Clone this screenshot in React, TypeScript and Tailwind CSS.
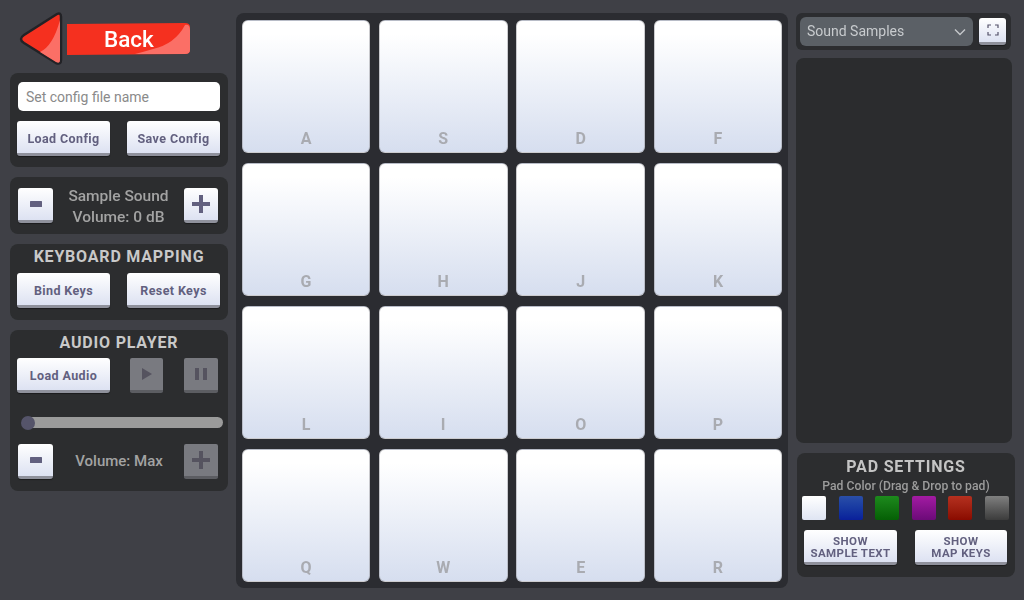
import React from 'react';

const padRows = [
  ['A', 'S', 'D', 'F'],
  ['G', 'H', 'J', 'K'],
  ['L', 'I', 'O', 'P'],
  ['Q', 'W', 'E', 'R'],
];

const swatches = [
  'from-white to-[#dfe5f3]',
  'from-[#2a4ea8] to-[#0a1f9a]',
  'from-[#1d8a1d] to-[#056005]',
  'from-[#a31ba3] to-[#6c0a78]',
  'from-[#b5301f] to-[#8a0a00]',
  'from-[#808080] to-[#3c3c3c]',
];

const btn =
  'flex items-center justify-center rounded-[3px] bg-gradient-to-b from-white to-[#dde2f2] border-b-[3px] border-[#8f919c] font-bold text-[#62607f] shadow-[0_1px_1px_rgba(0,0,0,0.4)]';
const btnOff =
  'flex items-center justify-center rounded-[2px] bg-[#797a80] border-b-[3px] border-[#5c5d62] text-[#55535f]';
const title = 'text-center text-[16px] leading-[20px] font-bold tracking-[0.8px]';

const TextButton = ({ label, className = '' }: { label: string; className?: string }) => (
  <button className={`${btn} h-[35px] w-[93px] pt-[4px] text-[12.5px] tracking-[0.4px] ${className}`}>{label}</button>
);

const PlusIcon = () => (
  <svg width="20" height="20" viewBox="0 0 20 20" fill="currentColor">
    <path d="M8 1h4v7h7v4h-7v7H8v-7H1V8h7z" />
  </svg>
);

const MinusIcon = () => (
  <svg width="12" height="8" viewBox="0 0 12 8" fill="currentColor">
    <rect x="0" y="1" width="12" height="6" rx="0.5" />
  </svg>
);

const BackButton = () => (
  <div className="relative h-[54px] w-[172px]">
    <svg width="172" height="54" viewBox="0 0 172 54" className="absolute left-0 top-0">
      <path d="M2 27 Q2 25 5 23 L38 2 Q42 0 42 5 L42 48 Q42 53 37 51 L5 31 Q2 29 2 27 Z" fill="#f5301f" stroke="#222226" strokeWidth="2.5" strokeLinejoin="round" />
      <path d="M21 40 Q34 34 41 8 L41 48 Q41 52 37 50 Z" fill="#fb6f66" />
      <path d="M48 12 L166 11 Q171 11 171 15 L171 38 Q171 42 166 42 L48 43 Z" fill="#f5301f" />
      <path d="M134 37 Q156 32 166 13 Q171 12 171 18 L171 38 Q171 42 166 42 L116 42 Q124 40 134 37 Z" fill="#fb6f66" />
    </svg>
    <span className="absolute left-[85px] top-[11px] text-[22.5px] leading-[32px] font-medium text-white">Back</span>
  </div>
);

const App: React.FC = () => {
  return (
    <div className="h-[600px] w-[1024px] overflow-hidden bg-[#3f4046]">
      <div className="flex h-full w-full font-['Roboto',sans-serif] text-[#a3a3a3] blur-[0.4px]">
        {/* left controls */}
        <div className="ml-[10px] flex w-[218px] flex-col pt-[12px]">
          <div className="ml-[9px] h-[61px]">
            <BackButton />
          </div>

          <div className="flex h-[94px] flex-col rounded-[8px] bg-[#2c2d2f] px-[7px] pt-[9px]">
            <input
              placeholder="Set config file name"
              className="ml-[1px] h-[29px] w-[202px] rounded-[5px] bg-white px-[8px] text-[14px] text-[#333] outline-none placeholder:text-[#8a8a8a]"
            />
            <div className="mt-[10px] flex w-[203px] justify-between">
              <TextButton label="Load Config" />
              <TextButton label="Save Config" />
            </div>
          </div>

          <div className="mt-[10px] flex h-[57px] items-center justify-between rounded-[8px] bg-[#2c2d2f] pl-[8px] pr-[10px]">
            <button className={`${btn} h-[35px] w-[35px]`}><MinusIcon /></button>
            <div className="pt-[2px] text-center text-[15.5px] leading-[21px] font-medium">
              <div>Sample Sound</div>
              <div>Volume: 0 dB</div>
            </div>
            <button className={`${btn} h-[35px] w-[34px]`}><PlusIcon /></button>
          </div>

          <div className="mt-[10px] flex h-[76px] flex-col rounded-[8px] bg-[#2c2d2f] px-[7px]">
            <div className={`mt-[3px] ${title} text-[#c9c9c9]`}>KEYBOARD MAPPING</div>
            <div className="mt-[6px] flex w-[203px] justify-between">
              <TextButton label="Bind Keys" />
              <TextButton label="Reset Keys" />
            </div>
          </div>

          <div className="mt-[10px] flex h-[161px] flex-col rounded-[8px] bg-[#2c2d2f] px-[7px]">
            <div className={`mt-[3px] ${title} text-[#c9c9c9]`}>AUDIO PLAYER</div>
            <div className="mt-[5px] flex items-center">
              <TextButton label="Load Audio" />
              <button className={`${btnOff} ml-[20px] h-[35px] w-[33px]`}>
                <svg width="12" height="14" viewBox="0 0 12 14" fill="currentColor"><path d="M1 1l10 6-10 6z" /></svg>
              </button>
              <button className={`${btnOff} ml-[21px] h-[35px] w-[34px]`}>
                <svg width="12" height="14" viewBox="0 0 12 14" fill="currentColor"><path d="M0 1h4v12H0zM8 1h4v12H8z" /></svg>
              </button>
            </div>
            <div className="relative ml-[5px] mt-[24px] h-[11px] w-[201px] rounded-full bg-[#9b9b9b]">
              <div className="absolute -left-[1px] -top-[1px] h-[14px] w-[14px] rounded-full bg-[#55546a]" />
            </div>
            <div className="mt-[16px] flex items-center">
              <button className={`${btn} ml-[1px] h-[35px] w-[35px]`}><MinusIcon /></button>
              <div className="flex-1 pl-[1px] text-center text-[15px] font-medium">Volume: Max</div>
              <button className={`${btnOff} mr-[3px] h-[35px] w-[34px]`}><PlusIcon /></button>
            </div>
          </div>
        </div>

        {/* pads */}
        <div className="ml-[8px] mt-[13px] h-[575px] w-[552px] rounded-[8px] bg-[#2b2c31] px-[6px] pt-[7px]">
          <div className="grid grid-cols-[128px_129px_129px_128px] grid-rows-[133px_133px_133px_133px] gap-x-[8.67px] gap-y-[10px]">
            {padRows.flat().map(key => (
              <div
                key={key}
                className="flex items-end justify-center rounded-[6px] border border-[#9a9aa0]/50 bg-gradient-to-b from-white from-10% to-[#d6deef] pb-[1px] text-[16px] font-bold text-[#a9abb1]"
              >
                {key}
              </div>
            ))}
          </div>
        </div>

        {/* right side */}
        <div className="ml-[8px] flex w-[217px] flex-col pt-[13px]">
          <div className="flex h-[37px] w-[215px] items-center rounded-[6px] bg-[#2c2d30] pl-[4px]">
            <div className="flex h-[29px] w-[173px] items-center justify-between rounded-[6px] bg-[#5b6066] pl-[7px] pr-[5px] text-[14px] text-[#c8cbce]">
              <span>Sound Samples</span>
              <svg width="16" height="16" viewBox="0 0 16 16" fill="none" stroke="#c4c7ca" strokeWidth="1.4"><path d="M3 5.5l5 5 5-5" /></svg>
            </div>
            <div className={`${btn} ml-[6px] h-[27px] w-[27px] border-b-[1px]`}>
              <svg width="12" height="12" viewBox="0 0 12 12" fill="none" stroke="#55536a" strokeWidth="1.2"><path d="M1 4V1h3M8 1h3v3M11 8v3H8M4 11H1V8" /></svg>
            </div>
          </div>
          <div className="mt-[8px] h-[385px] w-[216px] rounded-[8px] bg-[#2b2c2e]" />
          <div className="ml-[1px] mt-[10px] flex h-[124px] w-[218px] flex-col rounded-[8px] bg-[#2c2d2f]">
            <div className={`mt-[4px] ${title} text-[#c4c4c4]`}>PAD SETTINGS</div>
            <div className="mt-[1px] text-center text-[12.2px] leading-[16px] font-medium text-[#9c9c9c]">Pad Color (Drag &amp; Drop to pad)</div>
            <div className="ml-[5px] mt-[2px] flex gap-[12.6px]">
              {swatches.map(c => (
                <div key={c} className={`h-[24px] w-[24px] rounded-[2px] bg-gradient-to-b ${c}`} />
              ))}
            </div>
            <div className="ml-[7px] mt-[10px] flex gap-[18px]">
              <button className={`${btn} h-[35px] w-[93px] pt-[1px] text-[11.5px] leading-[12px] tracking-[0.4px]`}>SHOW<br />SAMPLE TEXT</button>
              <button className={`${btn} h-[35px] w-[92px] pt-[1px] text-[11.5px] leading-[12px] tracking-[0.4px]`}>SHOW<br />MAP KEYS</button>
            </div>
          </div>
        </div>
      </div>
    </div>
  );
};

export default App;
